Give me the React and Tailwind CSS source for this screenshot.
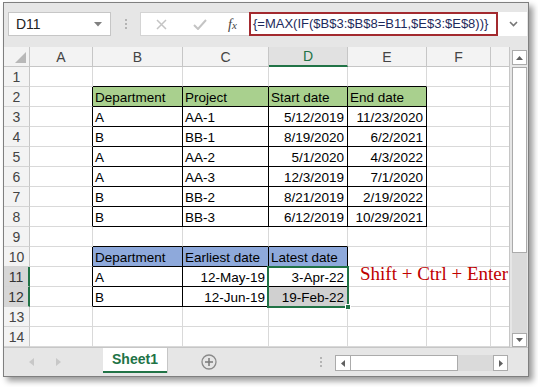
import React from "react";

const COLS = ["A", "B", "C", "D", "E", "F", "G"];

// cell contents, keyed by address
const CELLS = {
  B2: { v: "Department", bg: "green" },
  C2: { v: "Project", bg: "green" },
  D2: { v: "Start date", bg: "green" },
  E2: { v: "End date", bg: "green" },
  B3: { v: "A" }, C3: { v: "AA-1" }, D3: { v: "5/12/2019", r: true }, E3: { v: "11/23/2020", r: true },
  B4: { v: "B" }, C4: { v: "BB-1" }, D4: { v: "8/19/2020", r: true }, E4: { v: "6/2/2021", r: true },
  B5: { v: "A" }, C5: { v: "AA-2" }, D5: { v: "5/1/2020", r: true }, E5: { v: "4/3/2022", r: true },
  B6: { v: "A" }, C6: { v: "AA-3" }, D6: { v: "12/3/2019", r: true }, E6: { v: "7/1/2020", r: true },
  B7: { v: "B" }, C7: { v: "BB-2" }, D7: { v: "8/21/2019", r: true }, E7: { v: "2/19/2022", r: true },
  B8: { v: "B" }, C8: { v: "BB-3" }, D8: { v: "6/12/2019", r: true }, E8: { v: "10/29/2021", r: true },
  B10: { v: "Department", bg: "blue" },
  C10: { v: "Earliest date", bg: "blue" },
  D10: { v: "Latest date", bg: "blue" },
  B11: { v: "A" }, C11: { v: "12-May-19", r: true }, D11: { v: "3-Apr-22", r: true },
  B12: { v: "B" }, C12: { v: "12-Jun-19", r: true }, D12: { v: "19-Feb-22", r: true, bg: "sel" },
};

const inTable = (c, r) => {
  if (c < 1) return false;
  if (r >= 2 && r <= 8 && c >= 1 && c <= 4) return true;
  if (r >= 10 && r <= 12 && c >= 1 && c <= 3) return true;
  return false;
};

function Cell({ c, r }) {
  const addr = COLS[c] + r;
  const cell = CELLS[addr];
  const blackR = inTable(c, r) || inTable(c + 1, r);
  const blackB = inTable(c, r) || inTable(c, r + 1);
  const last = c === COLS.length - 1;

  let border = "border-r border-b border-r-[#d9d9d9] border-b-[#d9d9d9]";
  if (blackR && blackB) border = "border-r border-b border-r-black border-b-black";
  else if (blackR) border = "border-r border-b border-r-black border-b-[#d9d9d9]";
  else if (blackB) border = "border-r border-b border-r-[#d9d9d9] border-b-black";
  if (last) border = "border-b border-b-[#d9d9d9]";

  let bg = "bg-white";
  if (cell && cell.bg === "green") bg = "bg-[#a9d08e]";
  if (cell && cell.bg === "blue") bg = "bg-[#8ea9db]";
  if (cell && cell.bg === "sel") bg = "bg-[#d0d0d0]";

  return (
    <div
      className={`${border} ${bg} flex items-center overflow-hidden whitespace-nowrap text-[13.5px] leading-[19px] pt-px text-black ${
        cell && cell.r ? "justify-end pr-[3px]" : "pl-[2px]"
      }`}
    >
      {cell ? cell.v : ""}
    </div>
  );
}

function RowHeader({ r }) {
  const sel = r === 11 || r === 12;
  return (
    <div
      className={`flex items-center justify-center text-[14px] pt-px border-b border-b-[#d4d4d4] ${
        sel
          ? "bg-[#d6d6d6] text-[#333] border-r-2 border-r-[#217346]"
          : "bg-[#f3f3f3] text-[#444] border-r border-r-[#c6c6c6]"
      }`}
    >
      {r}
    </div>
  );
}

function Chevron() {
  return (
    <svg width="9" height="6" viewBox="0 0 9 6">
      <path d="M1 1 L4.5 4.5 L8 1" fill="none" stroke="#777" strokeWidth="1.6" />
    </svg>
  );
}

export default function App() {
  const rows = Array.from({ length: 14 }, (_, i) => i + 1);

  return (
    <div className="w-[538px] h-[387px] bg-white overflow-hidden font-['Liberation_Sans',Arial,sans-serif]">
      <div className="ml-[3px] mt-[2px] w-[526px] h-[375px] border border-[#7f7f7f] bg-[#e6e6e6] shadow-[4px_4px_6px_rgba(0,0,0,0.4)] flex flex-col">
        {/* FORMULA BAR */}
        <div className="h-[44px] flex items-start pt-[9px] pl-[4px] pr-[1px]">
          <div className="w-[103px] h-[24px] bg-white border border-[#c6c6c6] flex items-center justify-between pl-[7px] pr-[8px] text-[14px] text-[#222]">
            <span>D11</span>
            <svg width="8" height="5" viewBox="0 0 8 5">
              <path d="M0 0 H8 L4 4.5 Z" fill="#808080" />
            </svg>
          </div>
          <div className="w-[29px] h-[24px] flex flex-col items-center justify-center gap-[2px]">
            <div className="w-[2px] h-[2px] bg-[#b4b4b4]" />
            <div className="w-[2px] h-[2px] bg-[#b4b4b4]" />
            <div className="w-[2px] h-[2px] bg-[#b4b4b4]" />
          </div>
          <div className="w-[109px] h-[24px] bg-white border border-[#d4d4d4] border-r-0 flex items-center">
            <svg className="ml-[15px]" width="11" height="11" viewBox="0 0 11 11">
              <path d="M1 1 L10 10 M10 1 L1 10" stroke="#c4c4c4" strokeWidth="1.5" />
            </svg>
            <svg className="ml-[26px]" width="14" height="11" viewBox="0 0 14 11">
              <path d="M1 6 L5 10 L13 1" fill="none" stroke="#c4c4c4" strokeWidth="2" />
            </svg>
            <span className="ml-[21px] font-['Liberation_Serif',serif] italic text-[14px] text-[#444]">
              f<span className="text-[11px]">x</span>
            </span>
          </div>
          <div className="flex-1 h-[24px] bg-white flex items-center">
            <div className="w-[249px] h-[24px] border-2 border-[#a32a2f] flex items-center pl-[2px] text-[13px] text-[#1d2a5c] whitespace-nowrap overflow-hidden">
              {"{=MAX(IF($B$3:$B$8=B11,$E$3:$E$8))}"}
            </div>
            <div className="flex-1 flex justify-center pl-[2px]">
              <Chevron />
            </div>
          </div>
        </div>

        {/* GRID + VERTICAL SCROLLBAR */}
        <div className="h-[300px] flex">
          <div className="relative grid grid-cols-[26px_63px_90px_86px_79px_79px_64px_18px] grid-rows-[20px_repeat(14,20px)] bg-white">
            {/* header row */}
            <div className="bg-[#f3f3f3] border-r border-b border-[#c6c6c6] flex items-end justify-end p-[3px]">
              <svg width="11" height="11" viewBox="0 0 11 11">
                <path d="M11 0 V11 H0 Z" fill="#b8b8b8" />
              </svg>
            </div>
            {COLS.map((k, i) => (
              <div
                key={k}
                className={`flex items-center justify-center text-[14px] pt-px ${
                  k === "D"
                    ? "bg-[#e1e1e1] text-[#217346] border-r border-r-[#c6c6c6] border-b-2 border-b-[#217346]"
                    : i === COLS.length - 1
                    ? "bg-[#f3f3f3] text-[#444] border-b border-b-[#c6c6c6]"
                    : "bg-[#f3f3f3] text-[#444] border-r border-b border-[#c6c6c6]"
                }`}
              >
                {k === "G" ? "" : k}
              </div>
            ))}
            {rows.map((r) => (
              <React.Fragment key={r}>
                <RowHeader r={r} />
                {COLS.map((k, c) => (
                  <Cell key={k} c={c} r={r} />
                ))}
              </React.Fragment>
            ))}

            {/* selection D11:D12 */}
            <div className="absolute left-[263px] top-[219px] w-[82px] h-[42px] border-2 border-[#217346] pointer-events-none" />
            <div className="absolute left-[341px] top-[257px] w-[6px] h-[6px] bg-[#217346] border border-white" />

            {/* note */}
            <div className="absolute left-[356px] top-[213px] whitespace-nowrap font-['Liberation_Serif',serif] text-[19px] text-[#c00000] pointer-events-none">
              Shift + Ctrl + Enter
            </div>
          </div>

          <div className="flex-1 flex flex-col items-center pt-[3px] pl-[1px] border-l border-[#c6c6c6]">
            <div className="w-[15px] h-[15px] bg-white border border-[#ababab] flex items-center justify-center">
              <svg width="7" height="4" viewBox="0 0 7 4">
                <path d="M0 4 H7 L3.5 0 Z" fill="#606060" />
              </svg>
            </div>
            <div className="w-[15px] h-[186px] mt-[2px] bg-white border border-[#ababab]" />
            <div className="flex-1 w-[15px] bg-[#dadada]" />
            <div className="w-[15px] h-[14px] bg-white border border-[#ababab] flex items-center justify-center">
              <svg width="7" height="4" viewBox="0 0 7 4">
                <path d="M0 0 H7 L3.5 4 Z" fill="#606060" />
              </svg>
            </div>
          </div>
        </div>

        {/* SHEET TABS */}
        <div className="flex-1 flex items-start border-t border-[#c6c6c6]">
          <div className="w-[99px] h-[28px] flex items-center pl-[25px] gap-[22px]">
            <svg width="5" height="8" viewBox="0 0 5 8">
              <path d="M5 0 V8 L0 4 Z" fill="#c8c8c8" />
            </svg>
            <svg width="5" height="8" viewBox="0 0 5 8">
              <path d="M0 0 V8 L5 4 Z" fill="#c8c8c8" />
            </svg>
          </div>
          <div className="w-[64px] h-[25px] bg-white border-b-2 border-[#217346] flex items-center justify-center text-[14px] font-bold text-[#217346] shadow-[1px_0_0_#c6c6c6]">
            Sheet1
          </div>
          <div className="w-[168px] h-[28px] flex items-center">
            <svg className="ml-[34px]" width="16" height="16" viewBox="0 0 16 16">
              <circle cx="8" cy="8" r="7" fill="none" stroke="#8a8a8a" strokeWidth="1.3" />
              <path d="M8 4 V12 M4 8 H12" stroke="#7a7a7a" strokeWidth="1.5" />
            </svg>
            <div className="ml-[103px] flex flex-col gap-[2px]">
              <div className="w-[2px] h-[2px] bg-[#b4b4b4]" />
              <div className="w-[2px] h-[2px] bg-[#b4b4b4]" />
              <div className="w-[2px] h-[2px] bg-[#b4b4b4]" />
            </div>
          </div>
          <div className="w-[173px] h-[16px] mt-[7px] flex">
            <div className="w-[16px] h-[16px] bg-white border border-[#ababab] flex items-center justify-center">
              <svg width="4" height="7" viewBox="0 0 4 7">
                <path d="M4 0 V7 L0 3.5 Z" fill="#606060" />
              </svg>
            </div>
            <div className="w-[107px] h-[16px] bg-white border border-[#ababab] border-l-0" />
            <div className="flex-1 bg-[#dadada]" />
            <div className="w-[15px] h-[16px] bg-white border border-[#ababab] flex items-center justify-center">
              <svg width="4" height="7" viewBox="0 0 4 7">
                <path d="M0 0 V7 L4 3.5 Z" fill="#606060" />
              </svg>
            </div>
          </div>
        </div>
      </div>
    </div>
  );
}
